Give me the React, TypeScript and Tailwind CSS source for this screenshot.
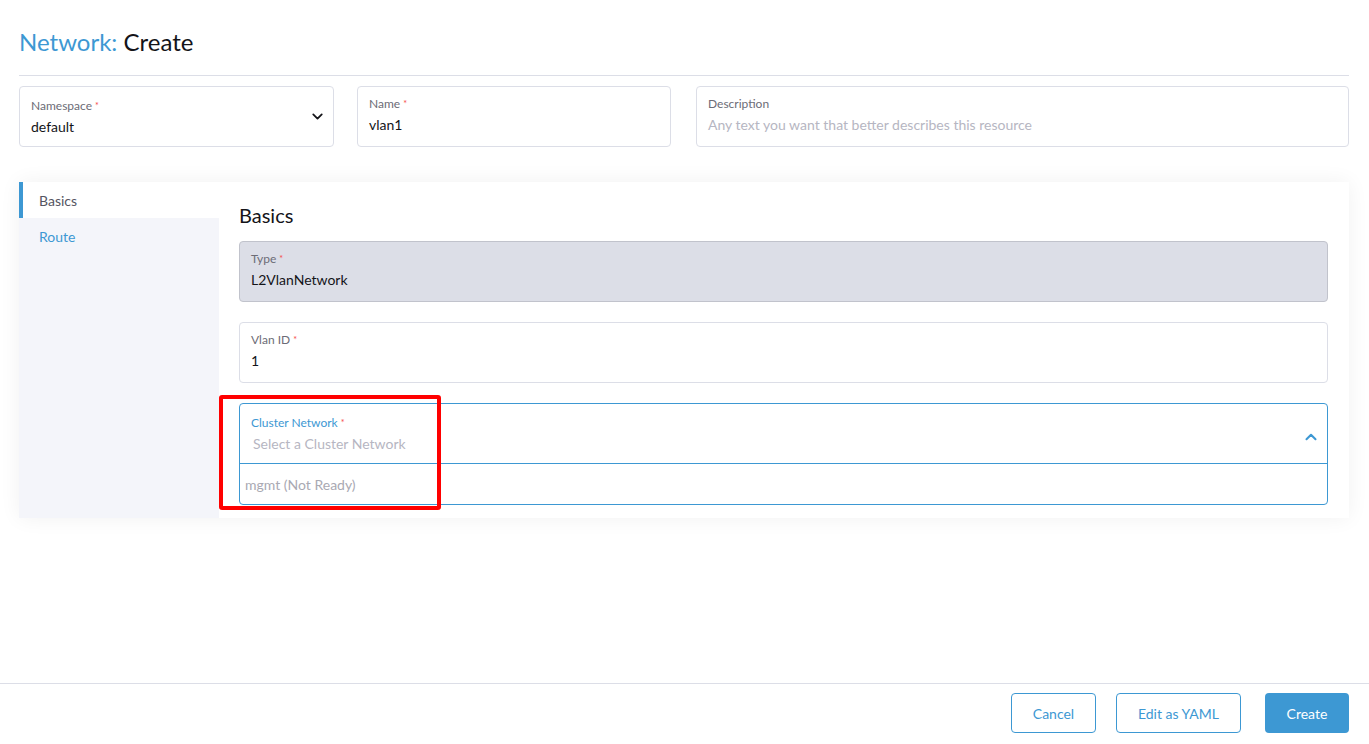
import { ChevronDown, ChevronUp } from "lucide-react";

function Req() {
  return <span className="text-[#f64747] text-[9px] align-top ml-[3px]">*</span>;
}

function Field({
  label,
  value,
  placeholder,
  required,
  disabled,
  select,
  className = "",
}: {
  label: string;
  value?: string;
  placeholder?: string;
  required?: boolean;
  disabled?: boolean;
  select?: boolean;
  className?: string;
}) {
  return (
    <div
      className={`relative h-[61px] rounded-[4px] border px-[11px] ${select ? "pt-[11px]" : "pt-[9px]"} ${
        disabled ? "bg-[#dcdee7] border-[#c1c3cc]" : "bg-white border-[#dcdee7]"
      } ${className}`}
    >
      <div className="text-[12px] leading-[16px] text-[#6c6c76]">
        {label}
        {required && <Req />}
      </div>
      <div className={`mt-[3px] text-[14px] leading-[20px] ${value ? "text-[#141419]" : "text-[#b6b6c2]"}`}>
        {value || placeholder}
      </div>
      {select && (
        <ChevronDown className="absolute right-[7px] top-[21px] w-[17px] h-[17px] text-[#141419]" strokeWidth={2.5} />
      )}
    </div>
  );
}

export default function App() {
  return (
    <div className="h-[744px] flex flex-col bg-white text-[#141419]" style={{ fontFamily: "Lato, 'Liberation Sans', sans-serif" }}>
      <div className="flex-1 px-[19px] pr-[20px]">
        {/* Header */}
        <h1 className="pt-[27px] pb-[18px] text-[24px] leading-[30px] border-b border-[#dcdee7]">
          <span className="text-[#3d98d3]">Network:</span> Create
        </h1>

        {/* Namespace / Name / Description */}
        <div className="flex mt-[10px]">
          <Field className="w-[315px]" label="Namespace" value="default" required select />
          <Field className="w-[314px] ml-[23px]" label="Name" value="vlan1" required />
          <Field className="flex-1 ml-[25px]" label="Description" placeholder="Any text you want that better describes this resource" />
        </div>

        {/* Tabbed panel */}
        <div className="mt-[35px] flex h-[336px] bg-white shadow-[0_0_20px_rgba(0,0,0,0.06)]">
          <div className="w-[200px] bg-[#f4f5fa] flex flex-col">
            <div className="h-[36px] bg-white border-l-[4px] border-[#3d98d3] pl-[16px] flex items-center text-[14px] text-[#555562]">
              Basics
            </div>
            <div className="h-[36px] pl-[20px] flex items-center text-[14px] text-[#3d98d3]">Route</div>
          </div>

          <div className="flex-1 pl-[20px] pr-[21px]">
            <h2 className="pt-[20px] text-[20px] leading-[26px] text-[#141419]">Basics</h2>
            <Field className="mt-[13px]" label="Type" value="L2VlanNetwork" required disabled />
            <Field className="mt-[20px]" label="Vlan ID" value="1" required />

            {/* Cluster network select (open) */}
            <div className="relative mt-[20px] rounded-[4px] border border-[#3d98d3] bg-white">
              <div className="relative h-[60px] px-[11px] pt-[11px] border-b border-[#3d98d3]">
                <div className="text-[12px] leading-[16px] text-[#3d98d3]">
                  Cluster Network
                  <Req />
                </div>
                <div className="mt-[3px] ml-[2px] text-[14px] leading-[20px] text-[#b6b6c2]">Select a Cluster Network</div>
                <ChevronUp className="absolute right-[7px] top-[24px] w-[18px] h-[18px] text-[#3d98d3]" strokeWidth={2.75} />
              </div>
              <div className="h-[40px] px-[5px] flex items-center text-[14px] text-[#a9a9b3]">mgmt (Not Ready)</div>

              {/* annotation */}
              <div className="absolute left-[-21px] top-[-9px] w-[222px] h-[115px] border-[4px] border-[#ff0000] rounded-[3px] pointer-events-none" />
            </div>
          </div>
        </div>
      </div>

      {/* Footer */}
      <div className="h-[61px] border-t border-[#dcdee7] flex items-center justify-end gap-[20px] pr-[20px] pb-[2px]">
        <button className="h-[40px] w-[85px] rounded-[4px] border border-[#3d98d3] text-[#3d98d3] text-[14px] bg-white">Cancel</button>
        <button className="h-[40px] w-[125px] rounded-[4px] border border-[#3d98d3] text-[#3d98d3] text-[14px] bg-white">Edit as YAML</button>
        <button className="h-[40px] w-[84px] ml-[4px] rounded-[4px] bg-[#3d98d3] text-white text-[14px]">Create</button>
      </div>
    </div>
  );
}
